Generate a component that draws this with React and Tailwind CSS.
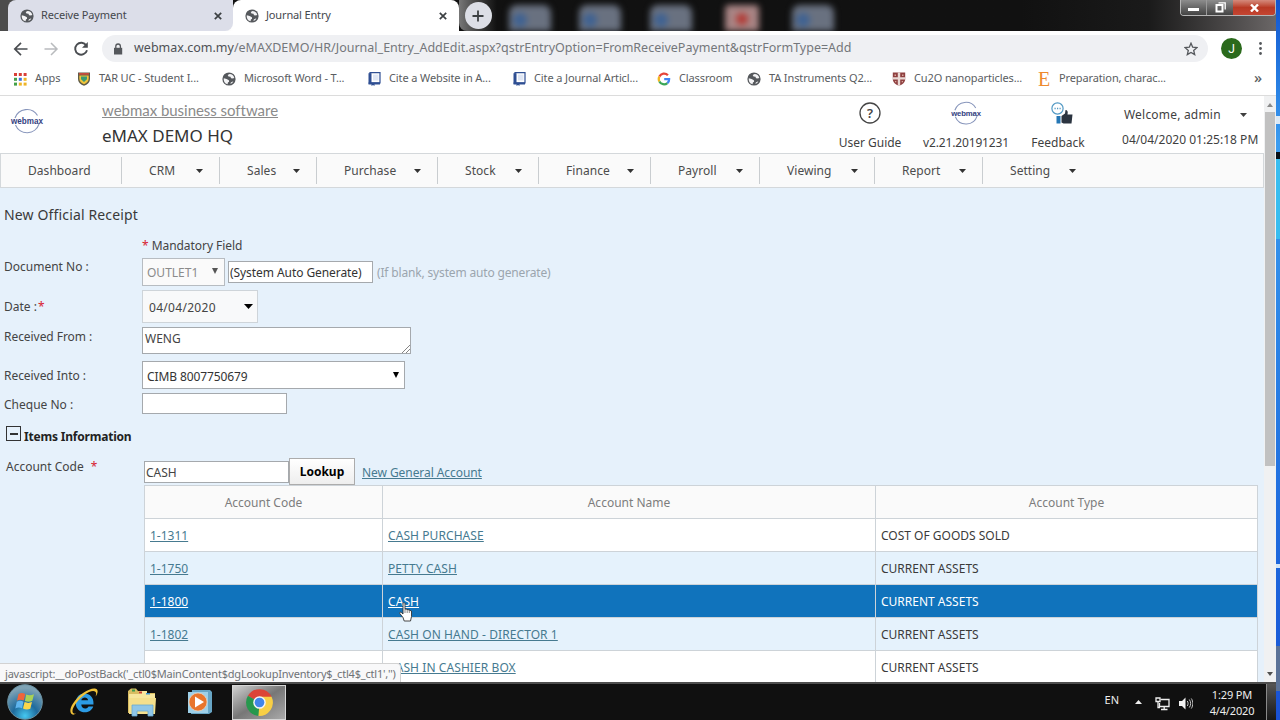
import clsx from 'clsx';

const bookmarks = [
  { label: 'Apps', icon: 'apps', width: 'w-16' },
  { label: 'TAR UC - Student I...', icon: 'crest', width: 'w-[145px]' },
  { label: 'Microsoft Word - T...', icon: 'globe', width: 'w-[145px]' },
  { label: 'Cite a Website in A...', icon: 'book', width: 'w-[145px]' },
  { label: 'Cite a Journal Articl...', icon: 'book', width: 'w-[145px]' },
  { label: 'Classroom', icon: 'google', width: 'w-[90px]' },
  { label: 'TA Instruments Q2...', icon: 'globe', width: 'w-[145px]' },
  { label: 'Cu2O nanoparticles...', icon: 'shield', width: 'w-[145px]' },
  { label: 'Preparation, charac...', icon: 'elsevier', width: 'w-[150px]' },
];

const menus = [
  { label: 'CRM', width: 'w-[98px]' },
  { label: 'Sales', width: 'w-[97px]' },
  { label: 'Purchase', width: 'w-[121px]' },
  { label: 'Stock', width: 'w-[101px]' },
  { label: 'Finance', width: 'w-[112px]' },
  { label: 'Payroll', width: 'w-[109px]' },
  { label: 'Viewing', width: 'w-[115px]' },
  { label: 'Report', width: 'w-[108px]' },
  { label: 'Setting', width: 'w-[109px]', last: true },
];

const accounts = [
  { code: '1-1311', name: 'CASH PURCHASE', type: 'COST OF GOODS SOLD' },
  { code: '1-1750', name: 'PETTY CASH', type: 'CURRENT ASSETS' },
  { code: '1-1800', name: 'CASH', type: 'CURRENT ASSETS', selected: true },
  { code: '1-1802', name: 'CASH ON HAND - DIRECTOR 1', type: 'CURRENT ASSETS' },
  { code: '1-1803', name: 'CASH IN CASHIER BOX', type: 'CURRENT ASSETS' },
];

const GlobeIcon = () => (
  <svg viewBox="0 0 14 14" className="size-3.5 shrink-0">
    <circle cx="7" cy="7" r="6.6" fill="#55585c" />
    <path d="M7.6 1.9 5.7 3.1l.8 1.4 2 .2.5 1.5 2.2.3 1.1-.9A5.3 5.3 0 0 0 7.6 1.9Z" fill="#f4f4f6" />
    <path d="M1.8 6.2 4.6 7l2.3 1.2.2 1.6-1.2.7-.3 1.7A5.3 5.3 0 0 1 1.8 6.2Z" fill="#f4f4f6" />
    <path d="m8.5 12 .3-1.6 1.9-1 .6.4A5.2 5.2 0 0 1 8.5 12Z" fill="#f4f4f6" />
  </svg>
);

const appColors = [
  '#d93f37', '#d93f37', '#d93f37',
  '#43a047', '#3b6fd8', '#efb526',
  '#43a047', '#efb526', '#efb526',
];

const BookmarkIcon = ({ name }) => {
  if (name === 'globe') return <GlobeIcon />;
  if (name === 'elsevier') {
    return (
      <span className="w-3.5 shrink-0 text-center font-['Liberation_Serif',serif] text-[20px] leading-none text-[#ee8a2e]">
        E
      </span>
    );
  }
  return (
    <svg viewBox="0 0 14 14" className="size-3.5 shrink-0">
      {name === 'apps' &&
        appColors.map((color, i) => (
          <rect key={i} x={1 + (i % 3) * 4.8} y={1 + Math.floor(i / 3) * 4.8} width="3" height="3" fill={color} />
        ))}
      {name === 'crest' && (
        <>
          <path d="M1 .5h12v6c0 4-2.6 6-6 7.2C3.6 12.5 1 10.5 1 6.5Z" fill="#5e5a45" />
          <path d="M2.3 3.5h9.4v3c0 3-2 4.700-4.700 5.700-2.700-1-4.700-2.700-4.700-5.700Z" fill="#f0c53c" />
          <path d="M4 4.500h6v2.800L7 10 4 7.300Z" fill="#3a9a74" />
          <path d="M2 1h10v1.800H2Z" fill="#c84b3c" />
        </>
      )}
      {name === 'book' && (
        <>
          <path d="M3 .6h10v10.2H3Z" fill="#fff" stroke="#2f4f93" strokeWidth="1.2" />
          <path d="M1.5 1.2h3v10.5h-3Z" fill="#2f4f93" />
          <path d="M6 2.5h5.5v6H6Z" fill="#dfe6f4" />
          <path d="M1.5 10.5h11.500v2H1.500Z" fill="#2f4f93" />
          <path d="M4.500 11h3v3L6 13l-1.500 1Z" fill="#2f4f93" />
        </>
      )}
      {name === 'google' && (
        <g fill="none" strokeWidth="2.3">
          <path d="M10.9 3.3A5.2 5.2 0 0 0 2.4 4.6" stroke="#e5443a" />
          <path d="M2.4 4.6a5.2 5.2 0 0 0 0 4.9" stroke="#f3b71f" />
          <path d="M2.4 9.5a5.2 5.2 0 0 0 8 1.6" stroke="#3aa757" />
          <path d="M10.4 11.1a5 5 0 0 0 1.7-3.9H7.2" stroke="#4284f3" />
        </g>
      )}
      {name === 'shield' && (
        <>
          <path d="M.8.5h12.4v6.500c0 3.500-2.700 5.500-6.200 6.800C3.500 12.500.8 10.500.8 7Z" fill="#8f4040" />
          <path d="M5.800.5h2.400v13.100L7 14l-1.200-.4ZM1 5.300h12v2.200H1Z" fill="#e9d9d5" />
          <path d="M2.500 2.500h1.500v1.500H2.500ZM10 2.500h1.500v1.500H10ZM3 9h1.300v1.300H3ZM9.700 9H11v1.300H9.700Z" fill="#d9a79d" />
        </>
      )}
    </svg>
  );
};

const Caret = ({ className = 'h-1 w-2' }) => (
  <svg viewBox="0 0 8 4" preserveAspectRatio="none" className={clsx('shrink-0', className)}>
    <path d="M0 0h8L4 4Z" fill="currentColor" />
  </svg>
);

const CloseIcon = () => (
  <svg viewBox="0 0 8 8" className="size-2 shrink-0">
    <path d="m.8.8 6.4 6.4M7.2.8.8 7.2" stroke="#3c4043" strokeWidth="1.7" />
  </svg>
);

const WebmaxLogo = ({ className }) => (
  <svg viewBox="0 0 34 28" className={clsx('overflow-visible', className)}>
    <path d="M5 11A12.500 12.500 0 0 1 27.500 8.500M29 17A12.500 12.500 0 0 1 5.500 18" fill="none" stroke="#8795bb" strokeWidth="1.1" />
    <text x="17" y="17" textAnchor="middle" textLength="32" lengthAdjust="spacingAndGlyphs" fontSize="8.5" fontWeight="700" fontFamily="Liberation Sans, sans-serif" fill="#33417f">
      webmax
    </text>
  </svg>
);

// blurred shortcuts showing through the glass title bar
const DesktopGhost = ({ className, pdf }) => (
  <div className={clsx('relative h-[26px] w-[42px] shrink-0 self-end blur-[3px]', className)}>
    {pdf ? (
      <>
        <div className="ml-1 h-full w-[34px] rounded-t bg-[#a98585]" />
        <div className="absolute top-2 left-[15px] size-3 rounded-full bg-[#b23b36]" />
      </>
    ) : (
      <>
        <div className="h-full w-[42px] rounded-t-lg bg-[#697180]" />
        <div className="absolute top-2 left-1 size-3.5 rounded-full bg-[#3f6292]" />
      </>
    )}
  </div>
);

const TabStrip = () => (
  <div className="flex h-[31px] overflow-hidden bg-linear-to-r from-[#111] from-80% via-[#1a1a1a] via-90% to-[#6b6767]">
    <div className="flex w-[233px] shrink-0 bg-linear-to-r from-[#4c4c4c] from-10% to-white">
      <div className="ml-2 flex w-[225px] shrink-0 items-center rounded-tl-lg rounded-br-lg bg-[#dcdee9] pr-[11px] pl-3 text-[11px] text-[#45484d]">
        <GlobeIcon />
        <span className="ml-[7px] grow tracking-[-0.15px]">Receive Payment</span>
        <CloseIcon />
      </div>
    </div>
    <div className="flex w-[226px] shrink-0 items-center rounded-t-lg bg-white pr-3 pl-3 text-[11px] text-[#45484d]">
      <GlobeIcon />
      <span className="ml-[7px] grow tracking-[-0.15px]">Journal Entry</span>
      <CloseIcon />
    </div>
    <div className="flex w-[38px] shrink-0 items-center justify-center rounded-bl-lg bg-linear-to-r from-[#777] to-[#111]">
      <div className="flex size-[27px] items-center justify-center rounded-full bg-[#dcdee6]">
        <svg viewBox="0 0 12 12" className="size-3">
          <path d="M6 .5v11M.5 6h11" stroke="#3c4043" strokeWidth="1.8" />
        </svg>
      </div>
    </div>
    <DesktopGhost className="ml-[12px]" />
    <DesktopGhost className="ml-7" />
    <DesktopGhost className="ml-[29px]" />
    <DesktopGhost className="ml-[29px]" pdf />
    <DesktopGhost className="ml-[29px]" />
    <div className="ml-auto flex h-4 shrink-0 overflow-hidden rounded-b border border-t-0 border-[#b5b5b5]">
      <div className="flex w-[26px] items-end justify-center border-r border-[#999] bg-linear-to-b from-[#8d8d8d] to-[#444] pb-[4px]">
        <div className="h-[3px] w-[11px] bg-white" />
      </div>
      <div className="flex w-[26px] items-center justify-center bg-linear-to-b from-[#8d8d8d] to-[#444]">
        <svg viewBox="0 0 11 11" className="size-[11px]">
          <path d="M3.5.8h6.7v6.7" fill="none" stroke="#fff" strokeWidth="1.3" />
          <path d="M1.5 3h6v6.500h-6Z" fill="none" stroke="#fff" strokeWidth="2" />
        </svg>
      </div>
      <div className="flex w-[42px] items-center justify-center bg-linear-to-b from-[#d48a7c] via-[#b83a25] to-[#c44532]">
        <svg viewBox="0 0 9 8" className="h-2 w-[9px]">
          <path d="m1 .5 7 7M8 .5l-7 7" stroke="#fff" strokeWidth="2.4" />
        </svg>
      </div>
    </div>
  </div>
);

const AddressBar = () => (
  <div className="flex h-[35px] items-center bg-white pl-[13px]">
    <svg viewBox="0 0 16 16" className="size-4 shrink-0" fill="none" stroke="#4a4d51" strokeWidth="1.7">
      <path d="M14.500 8H2M8 1.8 1.8 8 8 14.200" />
    </svg>
    <svg viewBox="0 0 16 16" className="ml-[14px] size-4 shrink-0" fill="none" stroke="#b9bbbe" strokeWidth="1.5">
      <path d="M1.500 8H14M8 2l6 6-6 6" />
    </svg>
    <svg viewBox="0 0 16 16" className="ml-[14px] size-4 shrink-0" fill="none" stroke="#4a4d51" strokeWidth="1.9">
      <path d="M13.300 4.500A6 6 0 1 0 14 9.300" />
      <path d="M14.800 1v5.700H9Z" fill="#4a4d51" stroke="none" />
    </svg>
    <div className="ml-[13px] flex h-[27px] w-[1106px] shrink-0 items-center rounded-full bg-[#eff0f3] pr-[10px] pl-[11px]">
      <svg viewBox="0 0 10 12" className="h-3 w-2.5 shrink-0">
        <path d="M1 4.800h8.200v6.700H1Z" fill="#55585c" />
        <path d="M2.800 5V3.300a2.300 2.300 0 0 1 4.600 0V5" fill="none" stroke="#55585c" strokeWidth="1.3" />
      </svg>
      <span className="ml-[11px] grow text-[12.5px] whitespace-nowrap text-[#74777b]">
        <span className="text-[#4e5155]">webmax.com.my</span>
        /eMAXDEMO/HR/Journal_Entry_AddEdit.aspx?qstrEntryOption=FromReceivePayment&amp;qstrFormType=Add
      </span>
      <svg viewBox="0 0 14 14" className="size-3.5 shrink-0">
        <path d="m7 1.200 1.700 4 4.300.4-3.300 2.800 1 4.200L7 10.400l-3.700 2.200 1-4.200L1 5.600l4.300-.4Z" fill="none" stroke="#55585c" strokeWidth="1.3" />
      </svg>
    </div>
    <div className="ml-[13px] flex size-[21px] shrink-0 items-center justify-center rounded-full bg-[#2b6a1c] font-[Roboto,sans-serif] text-[12px] text-white">
      J
    </div>
    <svg viewBox="0 0 3 13" className="ml-[17px] h-[13px] w-[3px] shrink-0" fill="#55585c">
      <circle cx="1.5" cy="1.5" r="1.4" />
      <circle cx="1.5" cy="6.5" r="1.4" />
      <circle cx="1.5" cy="11.5" r="1.4" />
    </svg>
  </div>
);

const BookmarksBar = () => (
  <div className="flex h-[30px] shrink-0 items-center border-b border-[#dcdcdc] bg-white pb-1 pl-[13px] text-[11px] text-[#5a5d61]">
    {bookmarks.map((b, i) => (
      <div key={i} className={clsx('flex shrink-0 items-center gap-2 whitespace-nowrap', b.width)}>
        <BookmarkIcon name={b.icon} />
        <span className="tracking-[-0.12px]">{b.label}</span>
      </div>
    ))}
    <span className="ml-auto pr-[14px] pb-0.5 text-[15px] leading-none font-medium">»</span>
  </div>
);

const HeaderLink = ({ label, children, className }) => (
  <div className={clsx('flex flex-col items-center', className)}>
    <div className="flex h-[34px] items-center">{children}</div>
    <span className="mt-[4px] text-[12px] whitespace-nowrap">{label}</span>
  </div>
);

const SiteHeader = () => (
  <header className="flex h-[57px] bg-white text-[#3f3f3f]">
    <WebmaxLogo className="mt-[11px] ml-[10px] h-7 w-[34px] shrink-0" />
    <div className="ml-[58px] flex grow flex-col">
      <a className="mt-[5px] font-[Lato,sans-serif] text-[15px] leading-[18px] tracking-[-0.03px] text-[#8b8b8b] underline">
        webmax business software
      </a>
      <span className="mt-[6px] text-[17px] leading-[22px] text-[#333]">eMAX DEMO HQ</span>
    </div>
    <HeaderLink label="User Guide" className="w-[62px]">
      <svg viewBox="0 0 22 22" className="size-[22px]">
        <circle cx="11" cy="11" r="10" fill="#fff" stroke="#444" strokeWidth="1.3" />
        <text x="11" y="15.500" textAnchor="middle" fontSize="13" fontWeight="600" fontFamily="Noto Sans, sans-serif" fill="#444">?</text>
      </svg>
    </HeaderLink>
    <HeaderLink label="v2.21.20191231" className="ml-[22px] w-[86px] tracking-[-0.15px]">
      <WebmaxLogo className="h-[26px] w-8" />
    </HeaderLink>
    <HeaderLink label="Feedback" className="ml-[23px] w-[52px]">
      <svg viewBox="0 0 22 22" className="ml-[7px] size-[22px]">
        <circle cx="6.5" cy="6.5" r="5.6" fill="#fff" stroke="#5299c4" strokeWidth="1.2" />
        <path d="M3.500 6.500h1.200M6 6.500h1.200M8.500 6.500h1.200" stroke="#5299c4" strokeWidth="1.3" />
        <path d="M5.500 14h4v7.500h-4Z" fill="#2577b5" />
        <path d="M10.500 14 14 11.500l.5-3.500c2 0 2.700 1.500 2 4.500h5l-1 9h-8l-2-1Z" fill="#2b3440" />
      </svg>
    </HeaderLink>
    <div className="mr-[6px] ml-[38px] flex w-[136px] shrink-0 flex-col">
      <div className="mt-[9px] flex h-5 items-center pl-[2px] text-[12px]">
        <span className="grow tracking-[0.2px] whitespace-nowrap">Welcome, admin</span>
        <Caret className="mr-[11px] h-1 w-[7px]" />
      </div>
      <span className="mt-[6px] text-[12px] leading-[18px] tracking-[0.02px] whitespace-nowrap">04/04/2020 01:25:18 PM</span>
    </div>
  </header>
);

const MenuBar = () => (
  <nav className="flex h-[35px] items-center border border-[#d4d8db] bg-[#fafafa] text-[12px] tracking-[0.05px] text-[#4c4c4c]">
    <div className="flex h-[27px] w-[121px] shrink-0 items-center border-r border-[#c9cdd0] pl-[27px]">Dashboard</div>
    {menus.map((m) => (
      <div
        key={m.label}
        className={clsx(
          'flex h-[27px] shrink-0 items-center justify-between pr-[16px] pl-[27px]',
          m.width,
          !m.last && 'border-r border-[#c9cdd0]'
        )}
      >
        {m.label}
        <Caret className="h-1 w-[7px] text-[#333]" />
      </div>
    ))}
  </nav>
);

const Label = ({ children, className }) => (
  <div className={clsx('w-[138px] shrink-0 leading-4', className)}>{children}</div>
);

const ReceiptForm = () => (
  <section className="text-[12px] text-[#444]">
    <h1 className="pt-[17px] pl-1 text-[14px] leading-5 tracking-[0.15px] text-[#3a3a3a]">New Official Receipt</h1>
    <div className="mt-[13px] pl-[142px] leading-4 tracking-[-0.05px]">
      <span className="text-[#d8202f]">*</span> Mandatory Field
    </div>
    <div className="mt-1 flex h-7 pl-1">
      <Label className="mt-px">Document No :</Label>
      <div className="flex w-[83px] shrink-0 items-center justify-between border border-[#b7bcc1] bg-[#fafafa] pt-0.5 pr-[6px] pl-1 text-[#8b8b8b]">
        OUTLET1
        <Caret className="mb-1 h-1.5 w-1.5 text-[#555]" />
      </div>
      <div className="mt-[3px] ml-[3px] flex h-[22px] w-[145px] shrink-0 items-center border border-[#a5a9ad] bg-white pt-0.5 pl-px tracking-[-0.07px] text-[#333]">
        (System Auto Generate)
      </div>
      <span className="mt-[7px] ml-1 leading-4 tracking-[-0.16px] text-[#9ba5ae]">(If blank, system auto generate)</span>
    </div>
    <div className="mt-1 flex h-[33px] pl-1">
      <Label className="mt-[9px]">
        Date : <span className="-ml-0.5 text-[#d8202f]">*</span>
      </Label>
      <div className="flex w-[116px] items-center justify-between border border-[#ced4d9] bg-[#f8f9fa] pt-0.5 pr-1 pl-1.5">
        <span className="tracking-[0.3px]">04/04/2020</span>
        <Caret className="mb-0.5 h-[5px] w-[9px] text-black" />
      </div>
    </div>
    <div className="mt-1 flex h-[27px] pl-1">
      <Label className="mt-[2px] tracking-[-0.05px]">Received From :</Label>
      <div className="relative w-[269px] border border-[#a5a9ad] bg-white pt-[3px] pl-0.5 leading-4">
        WENG
        <svg viewBox="0 0 8 8" className="absolute right-0 bottom-0 size-2">
          <path d="M0 8 8 0M4 8l4-4" stroke="#777" strokeWidth=".9" />
        </svg>
      </div>
    </div>
    <div className="mt-[7px] flex h-7 pl-1">
      <Label className="mt-[7px] tracking-[-0.05px]">Received Into :</Label>
      <div className="flex w-[263px] items-center justify-between border border-[#a5a9ad] bg-white pt-[3px] pr-[5px] pl-1 text-[#333]">
        <span className="tracking-[-0.1px]">CIMB 8007750679</span>
        <Caret className="mb-1 h-1.5 w-1.5 text-black" />
      </div>
    </div>
    <div className="mt-1 flex h-[21px] pl-1">
      <Label className="mt-[4px]">Cheque No :</Label>
      <div className="w-[145px] border border-[#a5a9ad] bg-white" />
    </div>
  </section>
);

const HandCursor = () => (
  <svg viewBox="0 0 14 20" className="absolute top-[17px] left-[16px] h-5 w-3.5">
    <path
      d="M4 1.500c0-1 2-1 2 0V7l1.800.3L10 8l2.500 1v5.500L11.500 19H5.200L4 15.500.8 11.500c-.5-1.300.9-1.800 1.800-.8L4 12Z"
      fill="#fff"
      stroke="#333"
      strokeWidth=".9"
    />
    <path d="M6 7v4M8.200 8v3M10.300 8.500V11" stroke="#555" strokeWidth=".7" />
  </svg>
);

const AccountTable = () => (
  <div className="ml-36 w-[1114px] border border-b-0 border-[#cdd3d8] text-[12px] text-[#3a3a3a]">
    <div className="grid h-8 grid-cols-[238px_493px_1fr] bg-[#fafafa] text-center text-[#7d7d7d]">
      <div className="flex items-center justify-center border-r border-[#cdd3d8] pt-0.5">Account Code</div>
      <div className="flex items-center justify-center border-r border-[#cdd3d8] pt-0.5">Account Name</div>
      <div className="flex items-center justify-center pt-0.5">Account Type</div>
    </div>
    {accounts.map((a, i) => (
      <div
        key={a.code}
        className={clsx(
          'grid h-[33px] grid-cols-[238px_493px_1fr] border-t border-[#cdd3d8]',
          a.selected ? 'bg-[#1073bc] text-white' : i % 2 ? 'bg-[#e5f2fc]' : 'bg-white'
        )}
      >
        <div className="flex items-center border-r border-[#cdd3d8] pt-0.5 pl-[5px]">
          <a className={clsx('underline', !a.selected && 'text-[#467a90]')}>{a.code}</a>
        </div>
        <div className="relative flex items-center border-r border-[#cdd3d8] pt-0.5 pl-[5px]">
          <a className={clsx('tracking-[0.08px] underline', !a.selected && 'text-[#467a90]')}>{a.name}</a>
          {a.selected && <HandCursor />}
        </div>
        <div className="flex items-center pt-0.5 pl-[5px]">{a.type}</div>
      </div>
    ))}
  </div>
);

const ItemsSection = () => (
  <section className="text-[12px] text-[#444]">
    <div className="mt-[11px] flex items-start pl-1.5">
      <div className="mt-[1px] flex size-[15px] items-center justify-center border border-[#333]">
        <div className="h-0.5 w-2 bg-[#333]" />
      </div>
      <span className="mt-1 ml-[3px] leading-4 font-bold tracking-[-0.2px] text-[#222]">Items Information</span>
    </div>
    <div className="mt-[13px] flex h-[27px] pl-1.5">
      <Label className="mt-px">
        Account Code <span className="ml-1 text-[#d8202f]">*</span>
      </Label>
      <div className="mt-[3px] flex h-[22px] w-[145px] items-center border border-[#a5a9ad] bg-white pt-px pl-px">CASH</div>
      <button className="w-[66px] border border-[#acacac] bg-linear-to-b from-white to-[#eee] pt-px font-bold text-black">
        Lookup
      </button>
      <a className="mt-[7px] ml-[7px] leading-4 tracking-[-0.07px] text-[#467a90] underline">New General Account</a>
    </div>
    <AccountTable />
  </section>
);

const Scrollbar = () => (
  <div className="flex w-3 shrink-0 flex-col items-center bg-[#f0f1f2]">
    <Caret className="mt-[7px] mb-[5px] h-1 w-1.5 rotate-180 text-[#8a8a8a]" />
    <div className="h-[354px] w-2.5 bg-[#c1c1c1]" />
    <Caret className="mt-auto mb-[6px] h-1 w-1.5 text-[#505050]" />
  </div>
);

const Taskbar = () => (
  <footer className="flex h-[38px] shrink-0 items-center border-t-2 border-[#4e4e4e] bg-[#101010]">
    <svg viewBox="0 0 36 36" className="ml-[7px] size-9 shrink-0">
      <defs>
        <radialGradient id="orb" cx=".5" cy=".9" r=".8">
          <stop offset="0" stopColor="#45c8f0" />
          <stop offset=".45" stopColor="#1f6b9d" />
          <stop offset="1" stopColor="#7fa3b5" />
        </radialGradient>
      </defs>
      <circle cx="18" cy="18" r="17.3" fill="url(#orb)" stroke="#6d93a3" />
      <path d="M11.500 10c2.500-1.500 4.500-1.200 6.700 0l-1.400 6.500c-2-1-4.300-1.200-6.800 0Z" fill="#f0653a" />
      <path d="M19.200 10.500c2.300 1 5 1 7.800-.3l-1.700 6.600c-2.500 1.200-5 1.200-7.400.1Z" fill="#a9d256" />
      <path d="M9.800 17.700c2.500-1.200 4.700-1 6.700 0L15 24.200c-2.200-1-4.300-1-6.700.2Z" fill="#5fb5ee" />
      <path d="M17.600 18.100c2.400 1.100 4.900 1.100 7.400 0l-1.700 6.600c-2.500 1.200-5 1-7.300-.2Z" fill="#fbd649" />
    </svg>
    <svg viewBox="0 0 32 32" className="ml-[25px] size-8 shrink-0">
      <path d="M25.500 18.500H13.300c0 4.500 5.500 5.300 7.200 2h4.700c-3 9-17.500 7.500-17.500-3.700C7.700 4.500 26.500 4 25.500 18.500Zm-12.200-4.200h6.800c-.5-3.800-6-3.800-6.800 0Z" fill="#2c9be4" />
      <path d="M8 27.500C3.500 31-.5 26 5 17.500 11.500 7 25.500-.5 29 3.500c1.500 2 0 5-1.500 7C29.500 6 27 3.500 21 6 12.500 10 4 21 4.500 25.500c.2 1.800 1.500 2.500 3.500 2Z" fill="#f1c239" />
    </svg>
    <svg viewBox="0 0 32 30" className="ml-[26px] h-[30px] w-8 shrink-0">
      <path d="M2 4 5 1.500h5L12 4h8v2h9v20H2Z" fill="#d9bd62" />
      <path d="M3 7h10V4h8v3h8v19H3Z" fill="#f7e69d" />
      <path d="M6 2.500h3v2H6Z" fill="#3f9c4f" />
      <path d="M13 4.500h3v2h-3Z" fill="#c83d31" />
      <path d="M20 6h4v1.500h-4Z" fill="#3c91cf" />
      <path d="M3 11h27l-1 16H3Z" fill="#f4df8c" />
      <path d="M6 18h21v11h-5v-5H11v5H6Z" fill="#8fc6e8" stroke="#68a8d0" strokeWidth=".8" />
    </svg>
    <svg viewBox="0 0 26 26" className="ml-[29px] size-[26px] shrink-0">
      <path d="M5 1h18l2 2v20l-3 2H4Z" fill="#68a6c6" />
      <path d="M1 3h20v21H1Z" fill="#9ed0e8" />
      <circle cx="11" cy="13" r="9" fill="#e8752c" stroke="#f2d1b6" strokeWidth=".7" />
      <path d="M8 7.500 17 13l-9 5.500Z" fill="#fff" />
    </svg>
    <div className="ml-[19px] flex h-[35px] w-[54px] shrink-0 items-center justify-center border border-[#d6d6d6] bg-linear-to-br from-[#d2d2d2] via-[#777] to-[#aaa]">
      <svg viewBox="0 0 30 30" className="size-[29px]">
        <path d="M15 15 3 8A14 14 0 0 1 27.500 9Z" fill="#dc4437" />
        <path d="M15 15 14 29A14 14 0 0 1 3 8Z" fill="#27984d" />
        <path d="M15 15 14 29A14 14 0 0 0 27.500 9H15Z" fill="#f8cf45" />
        <circle cx="15" cy="15" r="6.5" fill="#f5f5f5" />
        <circle cx="15" cy="15" r="5" fill="#4285e8" />
      </svg>
    </div>
    <div className="ml-auto flex shrink-0 items-center self-stretch text-[12px] text-[#ededed]">
      <span className="mb-1 text-[11px]">EN</span>
      <Caret className="ml-[16px] h-1 w-[7px] rotate-180" />
      <svg viewBox="0 0 15 15" className="mt-0.5 ml-[13px] size-[15px]" fill="none" stroke="#eee" strokeWidth="1.3">
        <path d="M5.500 3.500H14v7H4.500V7M6 13.500h6.500M9.200 10.500v3" />
        <path d="M1 2h4v3.500H1ZM3 5.500v6h2" />
      </svg>
      <svg viewBox="0 0 15 15" className="mt-0.5 ml-[8px] size-[15px]">
        <path d="M1 5h3l3.500-3.500v12L4 10H1Z" fill="#f3f3f3" />
        <path d="M9.300 5c1 1.500 1 3.500 0 5M11.300 3.500c1.800 2.500 1.800 5.500 0 8M13.300 2.500c2 3 2 7 0 10" fill="none" stroke="#ddd" strokeWidth=".9" />
      </svg>
      <div className="mt-0.5 ml-[13px] flex w-[52px] flex-col items-center text-[11px] leading-4 tracking-[-0.15px]">
        <span>1:29 PM</span>
        <span>4/4/2020</span>
      </div>
      <div className="ml-2 h-full w-2.5 border-l border-[#8a8a8a] bg-linear-to-b from-[#555] to-[#181818]" />
    </div>
  </footer>
);

// sliver of wallpaper to the right of the browser window
const DesktopEdge = () => (
  <div className="flex w-1 shrink-0 flex-col bg-linear-to-b from-[#1454cf] via-[#3b9cf0] via-20% to-[#1951d4]">
    <div className="mt-[116px] h-2 bg-[#dce9f5]" />
    <div className="mt-7 h-[7px] bg-[#071018]" />
    <div className="h-20 bg-[#38bdf0]" />
    <div className="mt-[325px] h-1 bg-[#d5e6f7]" />
    <div className="mt-[78px] h-[45px] bg-[#5b7297]" />
  </div>
);

export default function App() {
  return (
    <div className="flex h-[720px] w-[1280px] overflow-hidden bg-[#101010] font-['Noto_Sans','Open_Sans',sans-serif]">
      <div className="flex w-[1276px] shrink-0 flex-col">
        <TabStrip />
        <AddressBar />
        <BookmarksBar />
        <div className="relative flex h-[586px] shrink-0">
          <main className="h-full w-[1264px] shrink-0 overflow-hidden bg-[#e6f1fb]">
            <SiteHeader />
            <MenuBar />
            <ReceiptForm />
            <ItemsSection />
          </main>
          <Scrollbar />
          <div className="absolute bottom-0 left-0 flex h-[19px] w-[401px] items-center rounded-tr border-t border-r border-[#d2d2d2] bg-[#f8f8f9] pt-0.5 pl-[5px] text-[11px] tracking-[-0.2px] whitespace-nowrap text-[#6f7276]">
            {"javascript:__doPostBack('_ctl0$MainContent$dgLookupInventory$_ctl4$_ctl1','')"}
          </div>
        </div>
        <Taskbar />
      </div>
      <DesktopEdge />
    </div>
  );
}
